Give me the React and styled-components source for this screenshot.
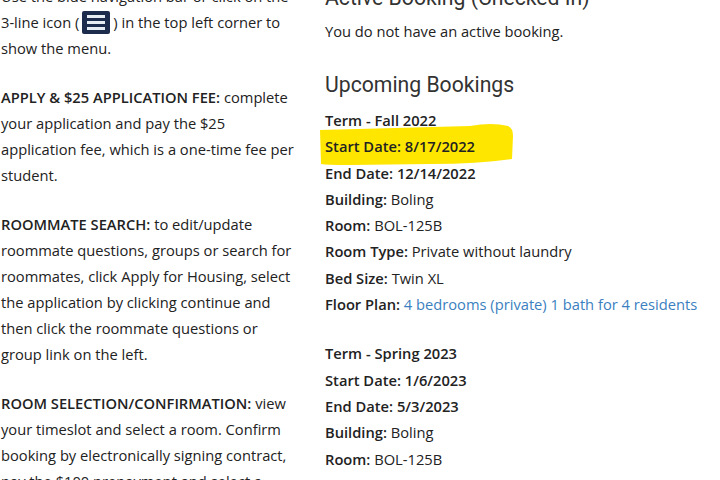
import styled, { createGlobalStyle } from "styled-components";

const GlobalStyle = createGlobalStyle`
  body {
    margin: 0;
    background: #ffffff;
    font-family: "Open Sans", "Liberation Sans", sans-serif;
    color: #222222;
  }
`;

const Page = styled.div`
  display: grid;
  grid-template-columns: 298px 1fr;
  column-gap: 26px;
  margin-top: -17px;
  padding-left: 1px;
  font-size: 14.7px;
`;

const Info = styled.div`
  line-height: 26px;
`;

const Para = styled.p`
  margin: 0 0 23px;
`;

const Strong = styled.span`
  font-weight: 600;
`;

const MenuIcon = styled.span`
  display: inline-flex;
  flex-direction: column;
  justify-content: center;
  gap: 3px;
  vertical-align: middle;
  width: 28px;
  height: 23px;
  margin: -4px 3px 0;
  padding: 0 5px;
  box-sizing: border-box;
  background: #1d2c4c;
  border-radius: 2px;
`;

const Bar = styled.span`
  display: block;
  height: 3px;
  background: #e8ecf3;
`;

const Bookings = styled.div`
  display: flex;
  flex-direction: column;
`;

const Heading = styled.h2`
  margin: ${(p) => p.$top || 0}px 0 0;
  font-family: Roboto, "Liberation Sans", sans-serif;
  font-weight: 400;
  font-size: 21.2px;
  line-height: 30px;
  color: #333333;
`;

const Note = styled.p`
  margin: 5px 0 0;
  line-height: 26px;
`;

const Term = styled.div`
  margin-top: ${(p) => p.$top}px;
`;

const Row = styled.div`
  position: relative;
  line-height: 26.3px;
  white-space: nowrap;
  font-weight: ${(p) => (p.$bold ? 600 : 400)};
`;

const RowText = styled.span`
  position: relative;
`;

const Label = styled.span`
  font-weight: 600;
`;

const Link = styled.a`
  color: #3b7fc0;
  text-decoration: none;
`;

const Marker = styled.svg`
  position: absolute;
  left: -5px;
  top: -10px;
`;

function Highlight() {
  return (
    <Marker width="196" height="44" viewBox="0 0 196 44">
      <path
        d="M0 7 L150 3 Q172 -1 188 3 Q193 5 193 13 L192 36 Q160 41 110 41 L30 42 Q6 42 1 41 Z"
        fill="#ffe600"
      />
    </Marker>
  );
}

function Field({ label, value, link }) {
  return (
    <Row>
      <Label>{label}:</Label>{" "}
      {link ? <Link href="#">{value}</Link> : value}
    </Row>
  );
}

const fall = [
  ["Building", "Boling"],
  ["Room", "BOL-125B"],
  ["Room Type", "Private without laundry"],
  ["Bed Size", "Twin XL"],
];

export default function App() {
  return (
    <>
      <GlobalStyle />
      <Page>
        <Info>
          <Para>
            Use the blue navigation bar or click on the 3-line icon (
            <MenuIcon>
              <Bar />
              <Bar />
              <Bar />
            </MenuIcon>
            ) in the top left corner to show the menu.
          </Para>
          <Para>
            <Strong>APPLY &amp; $25 APPLICATION FEE:</Strong> complete your
            application and pay the $25 application fee, which is a one-time
            fee per student.
          </Para>
          <Para>
            <Strong>ROOMMATE SEARCH:</Strong> to edit/update roommate
            questions, groups or search for roommates, click Apply for
            Housing, select the application by clicking continue and then
            click the roommate questions or group link on the left.
          </Para>
          <Para>
            <Strong>ROOM SELECTION/CONFIRMATION:</Strong> view your timeslot
            and select a room. Confirm booking by electronically signing
            contract, pay the $100 prepayment and select a meal plan.
          </Para>
        </Info>
        <Bookings>
          <Heading>Active Booking (Checked In)</Heading>
          <Note>You do not have an active booking.</Note>
          <Heading $top={26}>Upcoming Bookings</Heading>
          <Term $top={7}>
            <Row $bold>Term - Fall 2022</Row>
            <Row $bold>
              <Highlight />
              <RowText>Start Date: 8/17/2022</RowText>
            </Row>
            <Row $bold>End Date: 12/14/2022</Row>
            {fall.map(([l, v]) => (
              <Field key={l} label={l} value={v} />
            ))}
            <Field
              label="Floor Plan"
              value="4 bedrooms (private) 1 bath for 4 residents"
              link
            />
          </Term>
          <Term $top={23}>
            <Row $bold>Term - Spring 2023</Row>
            <Row $bold>Start Date: 1/6/2023</Row>
            <Row $bold>End Date: 5/3/2023</Row>
            <Field label="Building" value="Boling" />
            <Field label="Room" value="BOL-125B" />
          </Term>
        </Bookings>
      </Page>
    </>
  );
}
